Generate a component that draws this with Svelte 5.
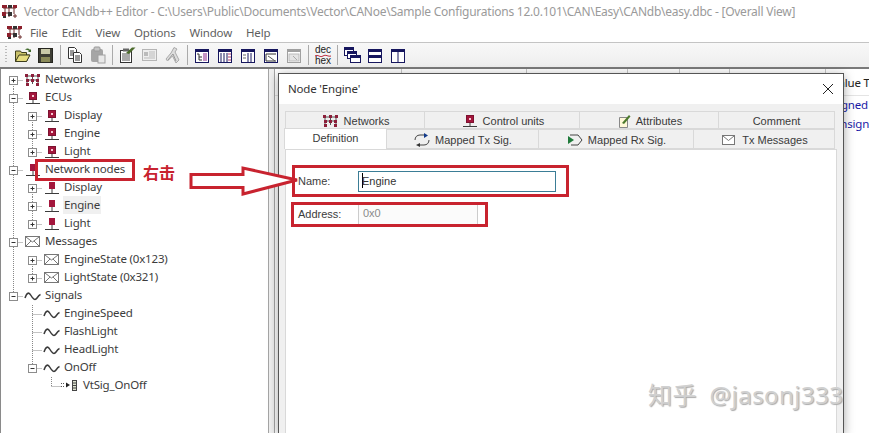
<script>
  const rows = [
    { label: 'Networks', icon: 'net', g: [], c: 'start', box: '+' },
    { label: 'ECUs', icon: 'ecu', g: [], c: 'tee', box: '-' },
    { label: 'Display', icon: 'ecu', g: [1], c: 'start', box: '+' },
    { label: 'Engine', icon: 'ecu', g: [1], c: 'tee', box: '+' },
    { label: 'Light', icon: 'ecu', g: [1], c: 'elbow', box: '+' },
    { label: 'Network nodes', icon: 'node', g: [], c: 'tee', box: '-' },
    { label: 'Display', icon: 'node', g: [1], c: 'start', box: '+' },
    { label: 'Engine', icon: 'node', g: [1], c: 'tee', box: '+', sel: true },
    { label: 'Light', icon: 'node', g: [1], c: 'elbow', box: '+' },
    { label: 'Messages', icon: 'msg', g: [], c: 'tee', box: '-' },
    { label: 'EngineState (0x123)', icon: 'msg', g: [1], c: 'start', box: '+' },
    { label: 'LightState (0x321)', icon: 'msg', g: [1], c: 'elbow', box: '+' },
    { label: 'Signals', icon: 'sig', g: [], c: 'elbow', box: '-' },
    { label: 'EngineSpeed', icon: 'sig', g: [0], c: 'tee' },
    { label: 'FlashLight', icon: 'sig', g: [0], c: 'tee' },
    { label: 'HeadLight', icon: 'sig', g: [0], c: 'tee' },
    { label: 'OnOff', icon: 'sig', g: [0], c: 'elbow', box: '-' },
    { label: 'VtSig_OnOff', icon: 'vt', g: [0, 0], c: 'elbow' }
  ];
  const menus = ['File', 'Edit', 'View', 'Options', 'Window', 'Help'];
  const tools = [
    ['open', 'save'], ['copy', 'paste'], ['props', 'form', 'tools'],
    ['w1', 'w2', 'w3', 'w4', 'w5'], ['dec'], ['casc', 'hsplit', 'vsplit']
  ];
  const columns = [126, 124, 100, 51, 49, 95];
</script>

{#snippet logo()}
  <svg width="16" height="16" viewBox="0 0 16 16">
    <path d="M1 4h13M3 4v5h6M7 4v9M12 4v6M11 12h4M13 10v4" stroke="#6b2a2a" fill="none"/>
    <rect x="0" y="1" width="5" height="3" fill="#8c1f2c"/><rect x="6" y="1" width="4" height="3" fill="#333"/><rect x="11" y="1" width="4" height="3" fill="#8c1f2c"/>
    <rect x="0" y="8" width="4" height="4" fill="#8c1f2c"/><rect x="6" y="8" width="4" height="4" fill="#333"/>
    <rect x="1" y="12" width="3" height="2" fill="#333"/>
  </svg>
{/snippet}

{#snippet tool(k)}
  <svg class="tool-svg" width="18" height="18" viewBox="0 0 18 18">
    {#if k === 'open'}
      <path d="M1.500 5h5l1 1.500h5V9h3l-3 6.500h-11z" fill="#c9c16a" stroke="#3d3d1c"/>
      <path d="M1.500 15.500 5 9h11l-3.500 6.500z" fill="#e5dc7f" stroke="#3d3d1c"/>
      <path d="M11 3.500c2-1.500 4-1 5 .5l1-1v3h-3l1-1c-1-1-2.500-1.300-4-1.500z" fill="#3f6a2a"/>
    {:else if k === 'save'}
      <rect x="1.500" y="2.500" width="14" height="14" fill="#3e3e34" stroke="#262620"/>
      <rect x="4" y="3" width="9" height="5" fill="#c9c9a8"/>
      <rect x="4" y="11" width="9" height="5" fill="#8a8a58"/>
    {:else if k === 'copy'}
      <path d="M2.500 1.500h6l2 2v9h-8z" fill="#fff" stroke="#333"/>
      <path d="M7.500 6.500h6l2 2v8h-8z" fill="#fff" stroke="#333"/>
      <path d="M4 5h4M4 7h3M4 9h3M9 10h5M9 12h5M9 14h5" stroke="#333"/>
    {:else if k === 'paste'}
      <rect x="2" y="3" width="12" height="13" rx="2" fill="#a5a5a5"/>
      <rect x="5" y="1" width="6" height="4" rx="1" fill="#c5c5c5" stroke="#999"/>
      <rect x="9" y="9" width="7" height="8" fill="#e8e8e8" stroke="#a0a0a0"/>
    {:else if k === 'props'}
      <rect x="2.500" y="4.500" width="11" height="12" fill="#fff" stroke="#333"/>
      <rect x="5" y="2.500" width="6" height="3" fill="#666"/>
      <path d="M4 8h8M4 10h8M4 12h8M4 14h8" stroke="#555"/>
      <path d="M8 7 14 1.500h3.500L11 8z" fill="#4c6b2c"/>
    {:else if k === 'form'}
      <rect x="1.500" y="3.500" width="14" height="11" fill="#eee" stroke="#b5b5b5"/>
      <rect x="3" y="6" width="4" height="4" fill="#bbb"/>
      <path d="M8 6h6M8 8h6M8 10h6M3 12h11" stroke="#bbb"/>
    {:else if k === 'tools'}
      <path d="M10 1.500 13 3l-2 3 4 8-3 3-3.500-7-5 5L2 13l5-6z" fill="#ddd" stroke="#aaa"/>
      <path d="M4 14l5-6 3 7" fill="none" stroke="#999"/>
    {:else if k === 'w1' || k === 'w2' || k === 'w3' || k === 'w4' || k === 'w5'}
      {@const c = k === 'w5' ? '#a0a0a0' : '#16165e'}
      <rect x="2.500" y="3.500" width="13" height="13" fill="#fff" stroke={c}/>
      <rect x="2" y="3" width="14" height="3" fill={c}/>
      {#if k === 'w1'}
        <path d="M4 8h2M6 8v6M6 11h3M6 14h3" stroke="#333" fill="none"/>
        <path d="M10 8h4M10 10h4M10 12h4M10 14h4" stroke="#8d2a8d"/>
      {:else if k === 'w2'}
        <path d="M5 7v9M8 7v9M11 7v9" stroke="#16165e"/>
        <path d="M12 8h3M12 11h3M12 14h3" stroke="#b03a6a"/>
      {:else if k === 'w3'}
        <path d="M9 7v9M12 7v9" stroke="#16165e"/>
        <path d="M4 9h3M4 12h3" stroke="#666"/>
      {:else if k === 'w4'}
        <path d="M4 8h10M4 8v7h10" stroke="#333" fill="none"/>
        <path d="M6 10l3 2 4 3" stroke="#555" fill="none"/>
      {:else}
        <rect x="4" y="8" width="10" height="7" fill="#e4e4e4" stroke="#bbb"/>
        <path d="M8 10l4 4" stroke="#aaa"/>
      {/if}
    {:else if k === 'dec'}
      <text x="9" y="7" text-anchor="middle" class="dec">dec</text>
      <text x="9" y="18" text-anchor="middle" class="dec">hex</text>
      <path d="M1 10c3-2 5 2 8 0s5 1 8 0" stroke="#b8283a" fill="none"/>
    {:else if k === 'casc'}
      <rect x="1.500" y="1.500" width="9" height="8" fill="#fff" stroke="#16165e"/><rect x="1" y="1" width="10" height="3" fill="#16165e"/>
      <rect x="4.500" y="5.500" width="9" height="7" fill="#fff" stroke="#16165e"/><rect x="4" y="5" width="10" height="3" fill="#16165e"/>
      <rect x="7.500" y="9.500" width="10" height="7" fill="#fff" stroke="#16165e"/><rect x="7" y="9" width="11" height="3" fill="#16165e"/>
    {:else if k === 'hsplit'}
      <rect x="2.500" y="3.500" width="13" height="13" fill="#fff" stroke="#16165e"/>
      <rect x="2" y="3" width="14" height="3" fill="#16165e"/><rect x="2" y="9" width="14" height="3" fill="#16165e"/>
    {:else}
      <rect x="2.500" y="3.500" width="13" height="13" fill="#fff" stroke="#16165e"/>
      <rect x="2" y="3" width="14" height="3" fill="#16165e"/><path d="M9 5v11" stroke="#16165e"/>
    {/if}
  </svg>
{/snippet}

{#snippet icon(k)}
  <svg width="19" height="18" viewBox="0 0 19 18">
    {#if k === 'net'}
      <path d="M2 5h15M4 5v8M9.500 5v8M15 5v8M3 9h13" stroke="#555" fill="none"/>
      <path d="M2 3h3v3H2zM8 3h3v3H8zM14 3h3v3h-3zM3 8h3v3H3zM8 8h3v3H8zM13 8h3v3h-3zM3 12h3v3H3zM13 12h3v3h-3z" fill="#8c1f3a"/>
    {:else if k === 'ecu'}
      <rect x="6.500" y="3.500" width="7" height="7" fill="#a3163c" stroke="#7c1230"/>
      <rect x="9" y="6" width="2" height="2" fill="#f6c9d3"/>
      <path d="M10 11v3M3 14.500h14" stroke="#3c3c3c"/>
    {:else if k === 'node'}
      <rect x="7" y="3" width="6" height="7" fill="#a3163c"/>
      <path d="M10 10v4M3 14.500h14" stroke="#3c3c3c"/>
    {:else if k === 'msg'}
      <rect x="2.500" y="3.500" width="14" height="10" fill="#fff" stroke="#777"/>
      <path d="M3 4l6.500 5L16 4M3 13l5-5M16 13l-5-5" stroke="#777" fill="none"/>
    {:else if k === 'sig'}
      <path d="M2 11c2-6 4-6 6-2.500S12 14 14 11s2-3 3.500-3.500" stroke="#3a3a3a" stroke-width="1.500" fill="none"/>
    {:else}
      <path d="M0 6.500h1M2 6.500h1M0 9.500h1M2 9.500h1" stroke="#555"/>
      <path d="M5 5.500 9 8 5 10.500z" fill="#222"/>
      <rect x="11.500" y="3.500" width="4" height="10" fill="#dfe3d0" stroke="#444"/>
      <path d="M12 6h3M12 8.500h3M12 11h3" stroke="#444"/>
    {/if}
  </svg>
{/snippet}

{#snippet connector(c, box)}
  <svg class="cell" width="19" height="18" viewBox="0 0 19 18">
    <path d="M9.500 {c === 'start' ? 9 : 0}V{c === 'elbow' ? 9 : 18}M9.500 9.500H19" class="dots"/>
    {#if box}
      <rect x="5.500" y="5.500" width="8" height="8" fill="#fff" stroke="#8c8c8c"/>
      <path d={box === '+' ? 'M7.500 9.500h4M9.500 7.500v4' : 'M7.500 9.500h4'} stroke="#333"/>
    {/if}
  </svg>
{/snippet}

<div class="app">
  <header class="title">
    <span class="logo">{@render logo()}</span>
    <span>Vector CANdb++ Editor - C:\Users\Public\Documents\Vector\CANoe\Sample Configurations 12.0.101\CAN\Easy\CANdb\easy.dbc - [Overall View]</span>
  </header>
  <nav class="menu">
    <span class="logo">{@render logo()}</span>
    {#each menus as m}<span class="menu-item">{m}</span>{/each}
  </nav>
  <div class="toolbar">
    <span class="grip"></span>
    {#each tools as group, i}
      {#if i > 0}<span class="sep"></span>{/if}
      {#each group as t}<span class="tool">{@render tool(t)}</span>{/each}
    {/each}
  </div>

  <main class="workspace">
    <aside class="tree">
      {#each rows as r}
        <div class="row">
          {#each r.g as g}
            <svg class="cell" width="19" height="18" viewBox="0 0 19 18">
              {#if g}<path d="M9.500 0V18" class="dots"/>{/if}
            </svg>
          {/each}
          {@render connector(r.c, r.box)}
          <span class="cell-icon">{@render icon(r.icon)}</span>
          <span class="label" class:sel={r.sel}>{r.label}</span>
        </div>
      {/each}
    </aside>
    <div class="splitter"></div>
    <section class="list">
      <div class="list-head">
        {#each columns as w}<span class="col" style="width:{w}px"></span>{/each}
        <span class="col-text">Value Type</span>
      </div>
      <div class="list-row"><span>Signed</span></div>
      <div class="list-row"><span>Unsigned</span></div>
    </section>
  </main>

  <div class="dialog">
    <div class="dlg-title">
      <span>Node 'Engine'</span>
      <svg class="close" width="12" height="12" viewBox="0 0 12 12"><path d="M1 1l10 10M11 1 1 11" stroke="#222" fill="none"/></svg>
    </div>
    <div class="dlg-body">
      <div class="tabs tabs-top">
        <div class="tab" style="width:140px"><svg width="19" height="18" viewBox="0 0 19 18"><path d="M2 5h15M4 5v8M9.500 5v8M15 5v8M3 9h13" stroke="#555" fill="none"/><path d="M2 3h3v3H2zM8 3h3v3H8zM14 3h3v3h-3zM3 8h3v3H3zM8 8h3v3H8zM13 8h3v3h-3zM3 12h3v3H3zM13 12h3v3h-3z" fill="#8c1f3a"/></svg>Networks</div>
        <div class="tab" style="width:155px">{@render icon('ecu')}Control units</div>
        <div class="tab" style="width:139px"><svg width="16" height="16" viewBox="0 0 16 16"><path d="M3.500 4.500h8v10h-8z" fill="#fff8d8" stroke="#888"/><path d="M6 10 13 2l1.500 1.500L8 11z" fill="#4c7a2c"/></svg>Attributes</div>
        <div class="tab" style="width:116px">Comment</div>
      </div>
      <div class="tabs tabs-bottom">
        <div class="tab active" style="width:103px">Definition</div>
        <div class="tab" style="width:152px"><svg width="18" height="16" viewBox="0 0 18 16"><path d="M2 8c0-3 2-5 5-5h5M16 8c0 3-2 5-5 5H6" stroke="#444" fill="none"/><path d="M11 1l4 2.500-4 2.500z" fill="#123a8a"/><path d="M7 11v4l-4-2z" fill="#333"/></svg>Mapped Tx Sig.</div>
        <div class="tab" style="width:155px"><svg width="18" height="16" viewBox="0 0 18 16"><path d="M4 3h8l4 5-4 5H5" stroke="#444" fill="none"/><path d="M2 4l6 4-6 4z" fill="#1f7a3a"/></svg>Mapped Rx Sig.</div>
        <div class="tab" style="width:141px"><svg width="18" height="14" viewBox="0 0 18 14"><rect x="2.500" y="2.500" width="12" height="9" fill="#fff" stroke="#777"/><path d="M3 3l5.500 4.500L14 3" stroke="#777" fill="none"/></svg>Tx Messages</div>
      </div>
      <div class="page">
        <div class="field">
          <span class="field-label name-label">Name:</span>
          <div class="input focused"><i class="caret"></i>Engine</div>
        </div>
        <div class="field field-addr">
          <span class="field-label">Address:</span>
          <div class="input readonly">0x0</div>
        </div>
      </div>
    </div>
  </div>

  <span class="mark mark-nodes"></span>
  <span class="mark mark-name"></span>
  <span class="mark mark-addr"></span>
  <span class="note">右击</span>
  <svg class="arrow" width="112" height="32" viewBox="0 0 112 32">
    <path d="M2 8.500H54V2L108 14 54 28V21.500H2z" fill="#fff" stroke="#c8232f" stroke-width="3"/>
  </svg>
  <span class="watermark">知乎 @jasonj333</span>
</div>

<style>
  :global(body) { margin: 0; background: #fff; }
  .app {
    position: relative;
    width: 869px;
    height: 433px;
    overflow: hidden;
    display: flex;
    flex-direction: column;
    font: 11.5px/18px "Noto Sans", "Noto Sans CJK SC", sans-serif;
    letter-spacing: -.18px;
    color: #3c3c3c;
    background: #fff;
  }
  .title {
    box-sizing: border-box;
    height: 22px;
    display: flex;
    align-items: center;
    gap: 6px;
    padding: 1px 0 0 2px;
    font-size: 12px;
    letter-spacing: -.24px;
    color: #9a9a9a;
    white-space: nowrap;
    flex: none;
  }
  .logo { display: flex; }
  .menu {
    box-sizing: border-box;
    height: 20px;
    display: flex;
    align-items: center;
    padding: 1px 0 0 7px;
    color: #5f5f5f;
    flex: none;
  }
  .menu-item { padding: 0 7px; }
  .toolbar {
    box-sizing: border-box;
    height: 27px;
    display: flex;
    align-items: center;
    position: relative;
    padding-left: 11px;
    background: linear-gradient(#f8f8f8, #eeeeee);
    border-top: 1px solid #c4c4c4;
    border-bottom: 2px solid #7a7a7a;
    flex: none;
  }
  .grip {
    position: absolute;
    left: 5px;
    top: 3px;
    width: 2px;
    height: 18px;
    background: repeating-linear-gradient(#bbb 0 1px, transparent 1px 3px);
  }
  .tool { width: 23px; display: flex; justify-content: center; }
  .tool-svg { overflow: visible; }
  .dec { font: 10px/1 "Liberation Sans", sans-serif; letter-spacing: 0; fill: #222; }
  .sep { width: 6px; height: 20px; display: block; background: linear-gradient(#aaa, #aaa) center / 1px 100% no-repeat; }
  .workspace { flex: 1; display: flex; min-height: 0; }
  .tree {
    width: 264px;
    border-left: 1px solid #8a8a8a;
    border-right: 1px solid #a5a5a5;
    padding: 2px 0 0 3px;
    flex: none;
  }
  .row { height: 18px; display: flex; align-items: center; white-space: nowrap; }
  .cell { display: block; flex: none; }
  .dots { stroke: #888; stroke-dasharray: 1 1; fill: none; }
  .cell-icon { display: flex; flex: none; width: 19px; }
  .label { margin: -2px 0 0 2px; padding: 0 1px; }
  .label.sel { background: #f0f0f0; }
  .splitter { width: 5px; background: #f0f0f0; border-right: 1px solid #a5a5a5; flex: none; }
  .list { flex: 1; min-width: 0; }
  .list-head { height: 26px; display: flex; border-bottom: 1px solid #e4e4e4; }
  .col { border-right: 1px solid #c8c8c8; flex: none; }
  .col-text { margin-left: 6px; line-height: 28px; white-space: nowrap; color: #222; }
  .list-row { height: 19px; padding-left: 557px; color: #1a1aa6; white-space: nowrap; }
  .dialog {
    position: absolute;
    left: 278px;
    top: 73px;
    width: 564px;
    height: 360px;
    border: 1px solid #555;
    border-bottom: 0;
    background: #f0f0f0;
    box-shadow: 0 2px 10px rgba(0, 0, 0, .35);
    display: flex;
    flex-direction: column;
  }
  .dlg-title {
    height: 30px;
    background: #fff;
    display: flex;
    align-items: center;
    justify-content: space-between;
    padding: 0 9px;
    color: #333;
    flex: none;
  }
  .dlg-body {
    padding: 7px 6px 0 5px;
    flex: 1;
    display: flex;
    flex-direction: column;
    min-height: 0;
    font: 11px/18px "Liberation Sans", sans-serif;
    letter-spacing: 0;
  }
  .tabs { display: flex; flex: none; }
  .tabs-top { height: 18px; margin-left: 1px; }
  .tabs-bottom { height: 20px; }
  .tab {
    box-sizing: border-box;
    display: flex;
    align-items: center;
    justify-content: center;
    gap: 4px;
    padding-top: 1px;
    border: 1px solid #d9d9d9;
    border-left: 0;
    background: #f0f0f0;
    color: #3a3a3a;
    white-space: nowrap;
  }
  .tabs-top .tab:first-child { border-left: 1px solid #d9d9d9; }
  .tab.active {
    background: #fff;
    border: 1px solid #d9d9d9;
    border-bottom: 0;
    padding: 0 0 3px;
    margin-top: -1px;
    height: 21px;
    position: relative;
  }
  .page {
    flex: 1;
    margin-left: 1px;
    background: #fff;
    border: 1px solid #d9d9d9;
    padding: 21px 0 0 12px;
  }
  .field { display: flex; align-items: center; height: 21px; }
  .field-addr { margin-top: 11px; }
  .field-label { width: 60px; flex: none; }
  .name-label { padding-bottom: 1px; }
  .input { box-sizing: border-box; height: 21px; line-height: 18px; padding: 0 0 2px 3px; display: flex; align-items: center; }
  .focused { width: 198px; border: 1px solid #3b7d96; color: #333; }
  .readonly { width: 120px; border-left: 1px solid #ccc; border-right: 1px solid #ccc; background: #fbfbfb; color: #8a8a8a; padding-left: 4px; }
  .caret { width: 1px; height: 15px; background: #000; margin-right: -1px; }
  .mark { position: absolute; box-sizing: border-box; border: 3px solid #c8232f; }
  .mark-nodes { left: 35px; top: 159px; width: 100px; height: 22px; }
  .mark-name { left: 292px; top: 165px; width: 277px; height: 32px; }
  .mark-addr { left: 291px; top: 202px; width: 197px; height: 25px; }
  .note {
    position: absolute;
    left: 143px;
    top: 161px;
    font: 700 16px/22px "Noto Sans CJK SC", sans-serif;
    letter-spacing: 0;
    color: #c8232f;
  }
  .arrow { position: absolute; left: 189px; top: 166px; }
  .watermark {
    position: absolute;
    left: 648px;
    top: 378px;
    font: 24px/34px "Noto Sans", "Noto Sans CJK SC", sans-serif;
    letter-spacing: .45px;
    word-spacing: 6px;
    color: #d0d0d0;
    text-shadow: 1px 1px 1px #aaa;
    white-space: nowrap;
  }
</style>
